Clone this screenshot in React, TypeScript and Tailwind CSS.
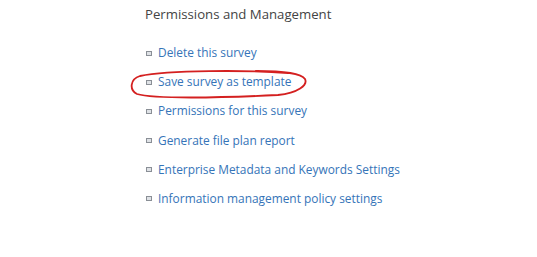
const items = [
  'Delete this survey',
  'Save survey as template',
  'Permissions for this survey',
  'Generate file plan report',
  'Enterprise Metadata and Keywords Settings',
  'Information management policy settings',
]

export default function App() {
  return (
    <div className="relative w-[537px] h-[257px] bg-white font-['Open_Sans',sans-serif]">
      <div className="pl-[145px] pt-[5px]">
        <h3 className="text-[13.2px] leading-[18px] text-[#444444]">Permissions and Management</h3>
        <ul className="mt-[21px] flex flex-col gap-[11.2px]">
          {items.map(item => (
            <li key={item} className="flex items-center h-[18px]">
              <span className="w-[6px] h-[5px] border border-[#8a8f96] bg-[#dfe2e6] ml-[1px] mr-[6px]" />
              <a className="text-[11.9px] text-[#3574b8]">{item}</a>
            </li>
          ))}
        </ul>
      </div>
      <svg className="absolute left-[128px] top-[67px]" width="184" height="34" viewBox="0 0 184 34" fill="none">
        <path
          d="M160 6 C120 3 40 3 12 9 C2 12 1 23 9 27 C25 32 90 31 150 28 C170 26 180 18 177 12 C173 6 150 4 128 4"
          stroke="#d42020"
          strokeWidth="1.8"
          strokeLinecap="round"
        />
      </svg>
    </div>
  )
}
